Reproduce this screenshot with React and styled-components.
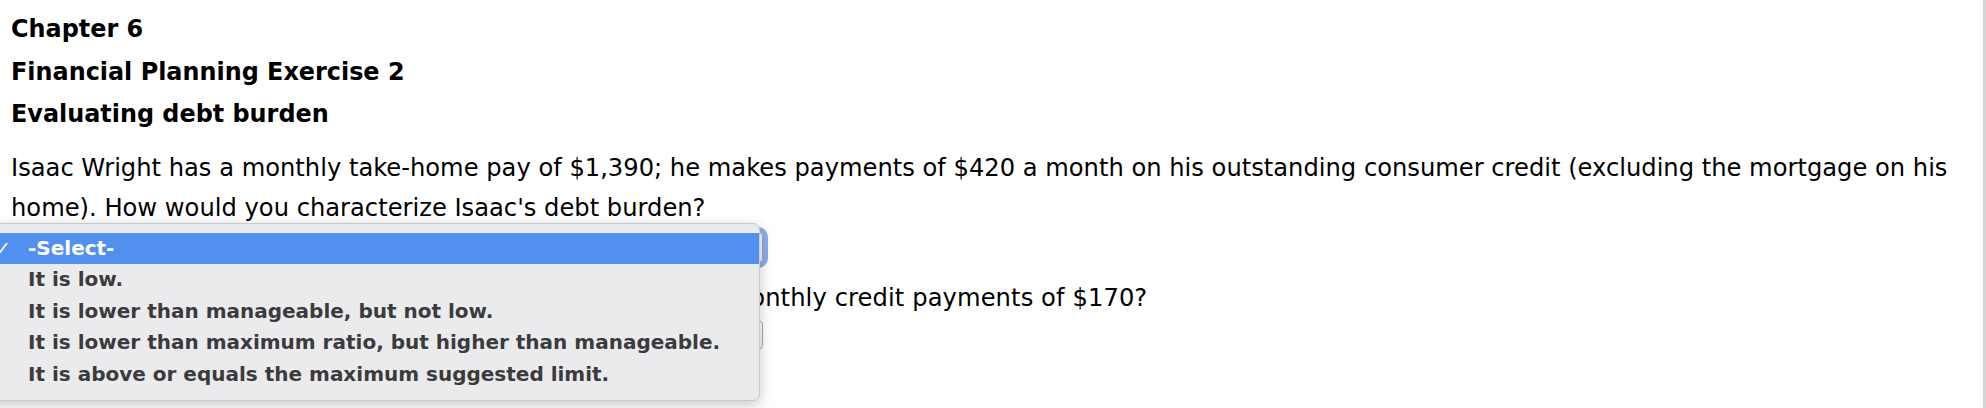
import React from 'react';
import styled, { createGlobalStyle } from 'styled-components';

const Global = createGlobalStyle`
  html, body {
    margin: 0;
    padding: 0;
    background: #fff;
  }

  body {
    font-family: "DejaVu Sans", Verdana, sans-serif;
    color: #000;
    overflow: hidden;
  }
`;

const Page = styled.div`
  box-sizing: border-box;
  width: 1986px;
  height: 408px;
  padding: 8px 0 0 11px;
  border-right: 3px solid #d4d4d4;
  overflow: hidden;
`;

const Heading = styled.h3`
  margin: 0;
  font-size: 23.9px;
  font-weight: 700;
  line-height: 42.5px;
`;

const Question = styled.p`
  margin: ${(p) => p.$top || 0}px 0 0;
  font-size: 24.2px;
  line-height: 40px;
  letter-spacing: ${(p) => p.$spacing || 0}px;
  white-space: nowrap;
`;

const SelectWrap = styled.div`
  position: relative;
  width: 752px;
  margin-top: ${(p) => p.$top}px;
`;

const SelectBox = styled.div`
  box-sizing: border-box;
  width: 752px;
  height: ${(p) => p.$height}px;
  border: 1px solid #a6a6a6;
  border-radius: 5px;
  background: linear-gradient(#ffffff, #f1f1f1);
  box-shadow: ${(p) => (p.$focused ? '0 0 0 5px rgba(86, 140, 232, 0.7)' : 'none')};
`;

const Popup = styled.ul`
  position: absolute;
  top: -9px;
  left: -23px;
  z-index: 5;
  box-sizing: border-box;
  width: 772px;
  margin: 0;
  padding: 9px 0 10px;
  list-style: none;
  background: #ebebed;
  border: 1px solid #c9c9cc;
  border-radius: 7px;
  box-shadow: 0 4px 14px rgba(0, 0, 0, 0.22);
  font-size: 20px;
  font-weight: 700;
`;

const Option = styled.li`
  position: relative;
  height: 31.6px;
  padding-left: 39px;
  line-height: 31.6px;
  white-space: nowrap;
  color: ${(p) => (p.$selected ? '#fff' : '#3b3b3d')};
  background: ${(p) => (p.$selected ? '#5190ee' : 'transparent')};
`;

const Check = styled.span`
  position: absolute;
  left: 6px;
  top: 0;
  font-weight: 400;
  font-size: 19px;
`;

const options = [
  '-Select-',
  'It is low.',
  'It is lower than manageable, but not low.',
  'It is lower than maximum ratio, but higher than manageable.',
  'It is above or equals the maximum suggested limit.',
];

export default function App() {
  return (
    <>
      <Global />
      <Page>
        <Heading>Chapter 6</Heading>
        <Heading>Financial Planning Exercise 2</Heading>
        <Heading>Evaluating debt burden</Heading>

        <Question $top={12}>
          Isaac Wright has a monthly take-home pay of $1,390; he makes payments of $420 a month on his outstanding consumer credit (excluding the mortgage on his
          <br />
          home). How would you characterize Isaac's debt burden?
        </Question>

        <SelectWrap $top={4}>
          <SelectBox $height={31} $focused />
          <Popup>
            {options.map((o, i) => (
              <Option key={o} $selected={i === 0}>
                {i === 0 && <Check>✓</Check>}
                {o}
              </Option>
            ))}
          </Popup>
        </SelectWrap>

        <Question $top={15} $spacing={0.1}>
          How would you characterize Isaac's debt burden if he had monthly credit payments of $170?
        </Question>

        <SelectWrap $top={2}>
          <SelectBox $height={30} />
        </SelectWrap>
      </Page>
    </>
  );
}
